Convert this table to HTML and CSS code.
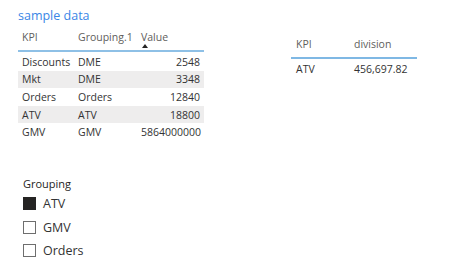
FILE: index.html
```html
<!DOCTYPE html>
<html lang="en">
<head>
    <meta charset="UTF-8">
    <title>Report</title>
    <link rel="stylesheet" href="styles.css">
</head>
<body>
    <div class="canvas">
        <div class="left">
            <div class="visual">
                <div class="title">sample data</div>
                <table class="grid grid-main">
                    <colgroup>
                        <col style="width:56px">
                        <col style="width:63px">
                        <col style="width:67px">
                    </colgroup>
                    <thead>
                        <tr>
                            <th>KPI</th>
                            <th>Grouping.1</th>
                            <th class="sorted">Value<span class="sort-arrow"></span></th>
                        </tr>
                    </thead>
                    <tbody>
                        <tr><td>Discounts</td><td>DME</td><td class="num">2548</td></tr>
                        <tr class="alt"><td>Mkt</td><td>DME</td><td class="num">3348</td></tr>
                        <tr><td>Orders</td><td>Orders</td><td class="num">12840</td></tr>
                        <tr class="alt"><td>ATV</td><td>ATV</td><td class="num">18800</td></tr>
                        <tr><td>GMV</td><td>GMV</td><td class="num">5864000000</td></tr>
                    </tbody>
                </table>
            </div>

            <div class="slicer">
                <div class="slicer-title">Grouping</div>
                <label class="option"><span class="box checked"></span>ATV</label>
                <label class="option"><span class="box"></span>GMV</label>
                <label class="option"><span class="box"></span>Orders</label>
            </div>
        </div>

        <div class="right">
            <table class="grid grid-side">
                <colgroup>
                    <col style="width:59px">
                    <col style="width:67px">
                </colgroup>
                <thead>
                    <tr><th>KPI</th><th>division</th></tr>
                </thead>
                <tbody>
                    <tr><td>ATV</td><td>456,697.82</td></tr>
                </tbody>
            </table>
        </div>
    </div>
</body>
</html>
```

FILE: styles.css
```css
body {
    margin: 0;
    background: #ffffff;
    font-family: "Segoe UI", "Open Sans", sans-serif;
    color: #252423;
}
.canvas {
    display: flex;
    width: 474px;
    height: 280px;
}
.left {
    width: 291px;
    box-sizing: border-box;
    padding-left: 18px;
    display: flex;
    flex-direction: column;
}
.title {
    color: #3a86e6;
    font-size: 12.5px;
    line-height: 18px;
    padding-top: 7px;
    padding-bottom: 2px;
}
.grid {
    border-collapse: collapse;
    table-layout: fixed;
    font-size: 10.5px;
}
.grid th {
    font-weight: normal;
    color: #605e5c;
    text-align: left;
    padding: 0 0 0 4px;
    height: 25px;
    vertical-align: middle;
    border-bottom: 2px solid #8ec0e6;
    white-space: nowrap;
}
.grid td {
    color: #333;
    padding: 0 0 0 4px;
    height: 17.6px;
    white-space: nowrap;
}
.grid-main {
    width: 186px;
}
.grid-main thead tr th {
    height: 19px;
    padding-bottom: 4px;
}
.grid-main tbody tr:first-child td {
    padding-top: 1px;
}
.grid .num {
    text-align: right;
    padding-right: 4px;
}
.alt td {
    background: #eeeded;
}
.sorted {
    position: relative;
}
.sort-arrow {
    position: absolute;
    left: 5px;
    bottom: 2px;
    width: 0;
    height: 0;
    border-left: 3px solid transparent;
    border-right: 3px solid transparent;
    border-bottom: 4px solid #252423;
}
.slicer {
    margin-top: 36px;
    padding-left: 5px;
    display: flex;
    flex-direction: column;
}
.slicer-title {
    font-size: 11px;
    color: #252423;
    line-height: 14px;
    margin-bottom: 1px;
}
.option {
    display: flex;
    align-items: center;
    gap: 7px;
    font-size: 12.5px;
    color: #333;
    height: 23.5px;
}
.box {
    width: 11px;
    height: 11px;
    border: 1px solid #6e6e6e;
    background: #fff;
}
.box.checked {
    background: #252423;
    border-color: #252423;
}
.right {
    padding-top: 31px;
}
.grid-side {
    width: 126px;
}
.grid-side th {
    padding-left: 5px;
    height: 26px;
    border-bottom-color: #7fb8e4;
}
.grid-side td {
    padding-left: 5px;
    height: 20px;
}
.grid-side td + td, .grid-side th + th {
    padding-left: 4px;
}
```
